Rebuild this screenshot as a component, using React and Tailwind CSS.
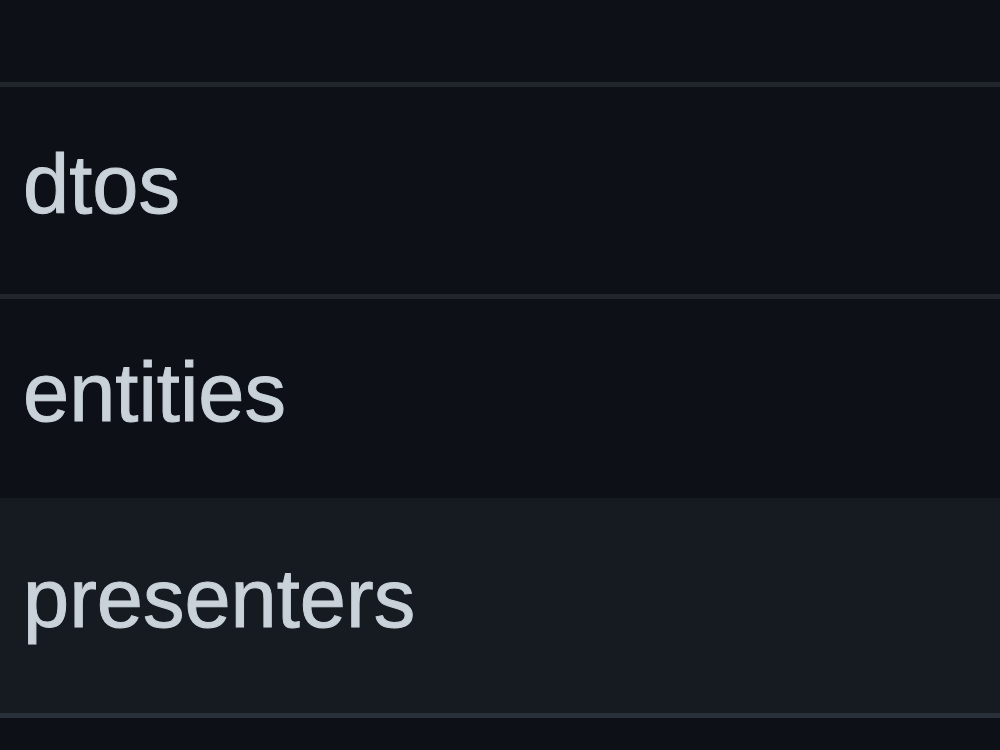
export default function App() {
  const rows = [
    { name: "dtos", h: "h-[212px]", pt: "pt-[56px]", bg: "bg-[#0d1117]", border: "border-[#21262d]" },
    { name: "entities", h: "h-[204px]", pt: "pt-[52px]", bg: "bg-[#0d1117]", border: "border-[#151a21]" },
    { name: "presenters", h: "h-[215px]", pt: "pt-[54px]", bg: "bg-[#161b22]", border: "border-[#2a3039]" },
  ];

  return (
    <div className="w-[1000px] h-[750px] overflow-hidden bg-[#0d1117] font-['Liberation_Sans',Arial,sans-serif]">
      {/* row above, cut off */}
      <div className="h-[87px] border-b-[5px] border-[#21262d]" />

      {rows.map((row) => (
        <div
          key={row.name}
          className={`${row.h} ${row.pt} ${row.bg} border-b-[5px] ${row.border} pl-[23px]`}
        >
          <span className="block text-[83px] leading-none text-[#c9d1d9] [-webkit-text-stroke:1px_#c9d1d9]">
            {row.name}
          </span>
        </div>
      ))}
    </div>
  );
}
